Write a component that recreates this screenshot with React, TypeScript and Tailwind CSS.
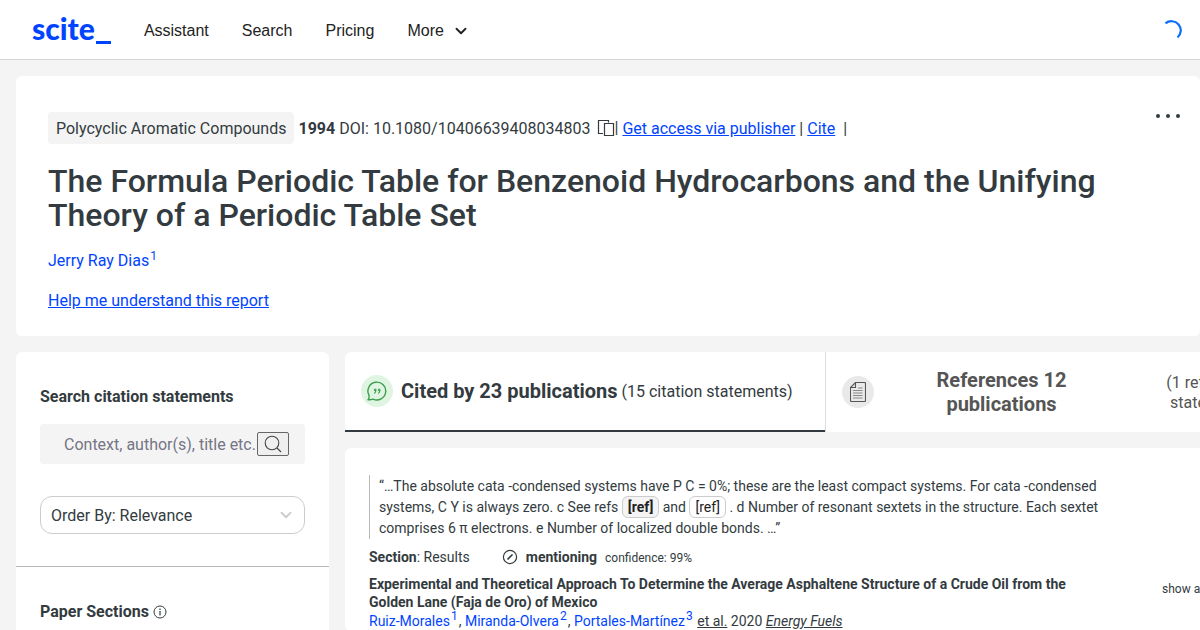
import React from 'react';
import { ChevronDown } from 'lucide-react';

const NAV_ITEMS = ['Assistant', 'Search', 'Pricing'];

const CITING_AUTHORS = [
  { name: 'Ruiz-Morales', ref: 1 },
  { name: 'Miranda-Olvera', ref: 2 },
  { name: 'Portales-Martínez', ref: 3 },
];

function CopyIcon() {
  return (
    <svg width="18" height="18" viewBox="0 0 18 18" fill="none" stroke="currentColor" strokeWidth="1.2" aria-hidden="true">
      <path d="M11.5 3.5V1.5H1.5V14.5H6" />
      <path d="M7.5 4.5H16.5V16.5H7.5Z" />
    </svg>
  );
}

function QuoteIcon() {
  return (
    <svg width="20" height="20" viewBox="0 0 20 20" fill="none" stroke="#3a9e4a" strokeWidth="1.4" aria-hidden="true">
      <path d="M1 18.700C2.200 17.600 2.300 16 2 14.300A8.900 8.900 0 1 1 6 18.100C4.500 18.600 2.800 18.900 1 18.700Z" strokeLinejoin="round" />
      <path d="M8.800 8.500V9.800C8.800 11 8.300 11.900 7.300 12.500M12.800 8.500V9.800C12.800 11 12.300 11.900 11.300 12.500" strokeWidth="1.1" />
      <path d="M7.300 8H8.900V9.800H7.300ZM11.300 8H12.900V9.800H11.300Z" fill="#3a9e4a" strokeWidth="0.5" />
    </svg>
  );
}

function DocumentIcon() {
  return (
    <svg width="16" height="20" viewBox="0 0 16 20" fill="none" stroke="#555" strokeWidth="1.1" aria-hidden="true">
      <path d="M5.5 .5H14.5Q15.5 .5 15.5 1.5V18.5Q15.5 19.5 14.5 19.5H1.5Q.5 19.5 .5 18.5V5.5L5.5 .5Z" />
      <path d="M5.5 .5V5.5H.5" />
      <path d="M8 6H12.500M3 8.500H12.500M3 11H12.500M3 13.500H12.500M3 16H12.500" stroke="#888" />
    </svg>
  );
}

function Header() {
  return (
    <header className="flex h-[60px] items-center justify-between border-b border-[#d4d4d4] bg-white pr-4 pl-8">
      <div className="flex items-center gap-[33px]">
        <a href="#" aria-label="scite_" className="flex items-end font-[Lato,sans-serif] text-[30px] leading-6 font-black text-[#0044ff]">
          <span className="pb-1">scite</span>
          <span className="ml-px h-[3px] w-[15px] bg-[#0044ff]" />
        </a>
        <nav className="flex items-center gap-[33px] pt-[2px] font-['Liberation_Sans',Arial,sans-serif] text-[#222]">
          {NAV_ITEMS.map((item) => (
            <a key={item} href="#">{item}</a>
          ))}
          <button type="button" className="flex items-center gap-2">
            More
            <ChevronDown size={18} strokeWidth={2.5} />
          </button>
        </nav>
      </div>
      <svg width="20" height="20" viewBox="0 0 20 20" fill="none" role="img" aria-label="Loading">
        <path d="M1.500 3.400A9.200 9.200 0 0 1 13.500 17.500" stroke="#0d6efd" strokeWidth="2.2" />
      </svg>
    </header>
  );
}

function PaperCard() {
  return (
    <section className="rounded-md bg-white px-8 pt-9 pb-[23px]">
      <div className="flex items-start justify-between">
        <div className="flex items-baseline gap-1">
          <span className="rounded bg-[#f4f4f4] px-2 pt-[5px] pb-[3px]">Polycyclic Aromatic Compounds</span>
          <b>1994</b>
          <span>DOI: 10.1080/10406639408034803</span>
          <span className="flex items-center self-center">
            <button type="button" aria-label="Copy DOI" className="ml-[2px]">
              <CopyIcon />
            </button>
            |
          </span>
          <a href="#" className="text-[#0044ff] underline">Get access via publisher</a>
          <span>|</span>
          <a href="#" className="text-[#0044ff] underline">Cite</a>
          <span className="ml-1">|</span>
        </div>
        <button type="button" aria-label="More actions" className="-mr-3 flex gap-[6px] py-[2px]">
          <span className="size-1 rounded-full bg-[#333b40]" />
          <span className="size-1 rounded-full bg-[#333b40]" />
          <span className="size-1 rounded-full bg-[#333b40]" />
        </button>
      </div>
      <h1 className="mt-5 max-w-[1100px] text-[32px] leading-[34px] font-medium">
        The Formula Periodic Table for Benzenoid Hydrocarbons and the Unifying Theory of a Periodic Table Set
      </h1>
      <p className="mt-[17px]">
        <a href="#" className="text-[#0044ff]">
          Jerry Ray Dias<sup className="ml-px text-xs">1</sup>
        </a>
      </p>
      <p className="mt-4">
        <a href="#" className="text-[#0044ff] underline">Help me understand this report</a>
      </p>
    </section>
  );
}

function Sidebar() {
  return (
    <aside className="w-[313px] shrink-0 rounded-md bg-white">
      <div className="border-b border-[#b8b8b8] px-6 pt-[33px] pb-8">
        <label htmlFor="statement-search" className="block font-bold">Search citation statements</label>
        <div className="mt-[15px] flex h-10 items-center rounded bg-[#f4f4f4] pr-4 pl-6">
          <input
            id="statement-search"
            type="text"
            placeholder="Context, author(s), title etc."
            className="min-w-0 flex-1 bg-transparent pt-[2px] placeholder:text-[#757585] focus:outline-none"
          />
          <button type="submit" aria-label="Search" className="flex h-6 w-8 items-center justify-center rounded-xs border border-[#666] bg-[#efefef]">
            <svg width="18" height="18" viewBox="0 0 18 18" fill="none" stroke="#444" strokeWidth="1.1" aria-hidden="true">
              <circle cx="8" cy="8" r="6.800" />
              <path d="M13 13L17 17" />
            </svg>
          </button>
        </div>
        <div className="relative mt-8">
          <select aria-label="Order by" className="h-[38px] w-full appearance-none rounded-xl border border-[#ccc] bg-white pt-[2px] pr-8 pl-[10px]">
            <option>Order By: Relevance</option>
            <option>Order By: Recency</option>
          </select>
          <ChevronDown size={18} strokeWidth={2.5} className="pointer-events-none absolute top-[10px] right-[10px] text-[#ccc]" />
        </div>
      </div>
      <div className="px-6 pt-[33px] pb-8">
        <h2 className="flex items-center gap-1 font-bold">
          Paper Sections
          <svg width="14" height="14" viewBox="0 0 14 14" fill="none" stroke="currentColor" aria-hidden="true">
            <circle cx="7" cy="7" r="6" strokeWidth="1" />
            <path d="M7 6V10.500M7 3.500V5" strokeWidth="1.2" />
          </svg>
        </h2>
      </div>
    </aside>
  );
}

function Tabs() {
  return (
    <div role="tablist" className="grid h-20 grid-cols-2 rounded-md bg-white">
      <button type="button" role="tab" aria-selected="true" className="flex items-center border-b-2 border-[#333b40] px-4 text-left">
        <span className="flex size-8 items-center justify-center rounded-full bg-[#dff5e1]">
          <QuoteIcon />
        </span>
        <span className="ml-2 text-xl font-bold">Cited by 23 publications</span>
        <span className="ml-1 pt-[2px]">(15 citation statements)</span>
      </button>
      <button type="button" role="tab" aria-selected="false" className="flex items-center border-l border-[#ddd] px-4 text-[#555]">
        <span className="flex size-8 items-center justify-center rounded-full bg-[#e9e9e9]">
          <DocumentIcon />
        </span>
        <span className="flex-1 px-8 text-xl leading-6 font-bold">References 12<br />publications</span>
        <span className="w-[160px] pt-[2px] leading-5">(1 reference<br />statement)</span>
      </button>
    </div>
  );
}

function CitationCard() {
  return (
    <article className="mt-4 rounded-md bg-white px-6 pt-[27px] text-sm">
      <blockquote className="max-w-[740px] border-l border-[#b8b8b8] pt-px pl-[9px] leading-[21px]">
        “…The absolute cata -condensed systems have P C = 0%; these are the least compact systems. For cata -condensed
        systems, C Y is always zero. c See refs{' '}
        <a href="#" className="rounded-md border border-[#ccc] bg-[#f4f4f4] px-[5px] py-[2px] font-bold text-[#222]">[ref]</a> and{' '}
        <a href="#" className="rounded-md border border-[#ccc] px-[5px] py-[2px] text-[#222]">[ref]</a> . d Number of
        resonant sextets in the structure. Each sextet comprises 6 π electrons. e Number of localized double bonds. …”
      </blockquote>
      <div className="mt-2 flex items-center">
        <span><b>Section</b>: Results</span>
        <svg className="ml-8" width="16" height="16" viewBox="0 0 16 16" fill="none" stroke="currentColor" strokeWidth="1.200" aria-hidden="true">
          <circle cx="8" cy="8" r="6.600" />
          <path d="M5.500 10.500L10.500 5.500" strokeWidth="1.600" />
        </svg>
        <b className="ml-2">mentioning</b>
        <span className="ml-2 pt-px text-xs">confidence: 99%</span>
      </div>
      <div className="mt-2 flex items-start">
        <div className="w-[728px]">
          <h3 className="leading-[18px] font-bold">
            Experimental and Theoretical Approach To Determine the Average Asphaltene Structure of a Crude Oil from the
            Golden Lane (Faja de Oro) of Mexico
          </h3>
          <p>
            {CITING_AUTHORS.map((author, i) => (
              <React.Fragment key={author.name}>
                {i > 0 && ', '}
                <a href="#" className="text-[#0044ff]">
                  {author.name}<sup className="mx-px text-xs">{author.ref}</sup>
                </a>
              </React.Fragment>
            ))}{' '}
            <a href="#" className="underline">et al.</a> 2020 <a href="#" className="italic underline">Energy Fuels</a>
          </p>
        </div>
        <button type="button" className="mt-[6px] ml-[65px] text-xs">show abstract</button>
      </div>
    </article>
  );
}

export default function App() {
  return (
    <div className="min-h-screen overflow-x-hidden bg-[#f4f4f4] font-[Roboto,sans-serif] text-base text-[#333b40]">
      <Header />
      <main className="pt-4 pl-4">
        <PaperCard />
        <div className="mt-4 flex gap-4">
          <Sidebar />
          <div className="min-w-[960px] flex-1">
            <Tabs />
            <CitationCard />
          </div>
        </div>
      </main>
    </div>
  );
}
